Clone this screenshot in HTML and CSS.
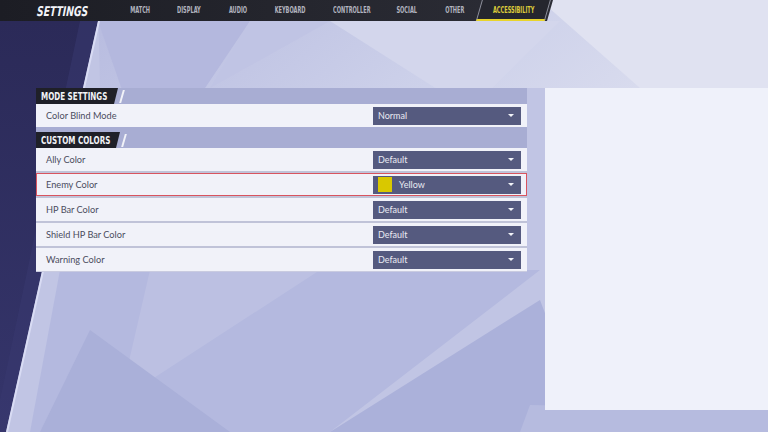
FILE: index.html
```html
<!DOCTYPE html>
<html lang="en">
<head>
<meta charset="utf-8">
<title>Settings - Accessibility</title>
<link rel="stylesheet" href="styles.css">
</head>
<body>
<div class="screen">
  <svg class="backdrop" viewBox="0 0 768 432" preserveAspectRatio="none" aria-hidden="true">
    <defs>
      <linearGradient id="band" x1="0" y1="0" x2="0" y2="1">
        <stop offset="0" stop-color="#2b2a58"/>
        <stop offset="1" stop-color="#35356b"/>
      </linearGradient>
      <linearGradient id="sky" x1="0" y1="0" x2="1" y2="0.4">
        <stop offset="0" stop-color="#b7bbdf"/>
        <stop offset="0.55" stop-color="#cdd1ea"/>
        <stop offset="1" stop-color="#dfe1f0"/>
      </linearGradient>
    </defs>
    <rect x="0" y="0" width="768" height="432" fill="#c1c5e4"/>
    <polygon points="98,0 768,0 768,230 545,88 100,88" fill="url(#sky)"/>
    <polygon points="330,21 560,21 470,110" fill="#d3d6ec"/>
    <polygon points="540,0 768,0 768,88 640,88" fill="#e0e2f1"/>
    <polygon points="98,21 250,21 150,170" fill="#b4b8de"/>
    <polygon points="250,21 330,21 210,88" fill="#c0c4e4"/>
    <polygon points="60,270 540,270 330,432 30,432" fill="#b4b9df"/>
    <polygon points="330,432 540,300 590,432" fill="#abb1da"/>
    <polygon points="150,270 320,270 120,400" fill="#bcc0e2"/>
    <polygon points="90,330 230,432 40,432" fill="#aab0d9"/>
    <polygon points="530,405 768,410 768,432 520,432" fill="#b6bbdf"/>
    <polygon points="0,21 98,21 6,432 0,432" fill="url(#band)"/>
    <polygon points="80,21 98,21 6,432 0,432 0,400" fill="#393970" opacity="0.55"/>
    <line x1="99" y1="21" x2="7" y2="432" stroke="#d9dcf4" stroke-width="2"/>
  </svg>

  <header class="topbar">
    <div class="title"><span>SETTINGS</span></div>
    <nav class="tabs">
      <span class="tab"><span>MATCH</span></span>
      <span class="tab"><span>DISPLAY</span></span>
      <span class="tab"><span>AUDIO</span></span>
      <span class="tab"><span>KEYBOARD</span></span>
      <span class="tab"><span>CONTROLLER</span></span>
      <span class="tab"><span>SOCIAL</span></span>
      <span class="tab"><span>OTHER</span></span>
      <span class="tab active"><span>ACCESSIBILITY</span></span>
    </nav>
  </header>

  <main class="content">
    <section class="settings">
      <div class="group-head first">
        <span class="group-label mode"><span>MODE SETTINGS</span></span><span class="slash"></span>
      </div>
      <div class="row">
        <span class="label">Color Blind Mode</span>
        <div class="select"><span class="value">Normal</span><span class="caret"></span></div>
      </div>

      <div class="group-head">
        <span class="group-label custom"><span>CUSTOM COLORS</span></span><span class="slash"></span>
      </div>
      <div class="row">
        <span class="label">Ally Color</span>
        <div class="select"><span class="value">Default</span><span class="caret"></span></div>
      </div>
      <div class="row sep selected">
        <span class="label">Enemy Color</span>
        <div class="select"><span class="swatch"></span><span class="value">Yellow</span><span class="caret"></span></div>
      </div>
      <div class="row sep">
        <span class="label">HP Bar Color</span>
        <div class="select"><span class="value">Default</span><span class="caret"></span></div>
      </div>
      <div class="row sep">
        <span class="label">Shield HP Bar Color</span>
        <div class="select"><span class="value">Default</span><span class="caret"></span></div>
      </div>
      <div class="row sep last">
        <span class="label">Warning Color</span>
        <div class="select"><span class="value">Default</span><span class="caret"></span></div>
      </div>
    </section>

    <aside class="preview"></aside>
  </main>
</div>
</body>
</html>
```

FILE: styles.css
```css
* { box-sizing: border-box; }

html, body {
  margin: 0;
  padding: 0;
  width: 768px;
  height: 432px;
  overflow: hidden;
  background: #c1c5e4;
}

.screen {
  position: relative;
  width: 768px;
  height: 432px;
  font-family: Lato, "Noto Sans", sans-serif;
}

.backdrop {
  position: absolute;
  left: 0;
  top: 0;
  width: 768px;
  height: 432px;
  z-index: 0;
}

/* ---------- top bar ---------- */
.topbar {
  position: relative;
  z-index: 1;
  width: 553px;
  height: 21px;
  background: linear-gradient(90deg, #1c1d24 0%, #25262e 55%, #2c2d36 100%);
  display: flex;
  align-items: stretch;
  padding-left: 37px;
  clip-path: polygon(0 0, 100% 0, calc(100% - 6px) 100%, 0 100%);
}

.title {
  width: 80px;
  display: flex;
  align-items: center;
  font-family: "DejaVu Sans Condensed", "DejaVu Sans", sans-serif;
  font-weight: 700;
  font-style: italic;
  font-size: 13.5px;
  color: #f2f3f8;
}

.title span {
  display: inline-block;
  transform: scaleX(0.76) skewX(-4deg);
  transform-origin: left center;
}

.tabs {
  display: grid;
  grid-template-columns: 46px 52px 46px 59px 63px 48px 47px 72px;
  height: 21px;
}

.tab {
  position: relative;
  display: flex;
  align-items: center;
  justify-content: center;
  font-family: "DejaVu Sans Condensed", "DejaVu Sans", sans-serif;
  font-size: 8px;
  font-weight: 700;
  color: #b1b3bf;
  white-space: nowrap;
}

.tab span {
  display: inline-block;
  transform: scaleX(0.7);
}

.tab.active {
  color: #dccb3a;
}

.tab.active::before {
  content: "";
  position: absolute;
  left: 1px;
  right: 2px;
  top: -1px;
  bottom: 0;
  background: #25262e;
  border-left: 1px solid #8f919d;
  border-right: 1px solid #8f919d;
  border-bottom: 2px solid #e8d42b;
  transform: skewX(-16deg);
  z-index: -1;
}

.tab.active span {
  position: relative;
  z-index: 1;
}

/* ---------- content ---------- */
.content {
  position: relative;
  z-index: 1;
  display: flex;
  align-items: flex-start;
  gap: 18px;
  padding: 67px 0 0 36px;
}

.settings {
  width: 491px;
  display: flex;
  flex-direction: column;
}

.group-head {
  display: flex;
  align-items: stretch;
  height: 21px;
  padding-top: 5px;
  background: #a8add3;
}

.group-head.first {
  height: 16px;
  padding-top: 0;
}

.group-label {
  display: flex;
  align-items: center;
  padding-left: 5px;
  overflow: hidden;
  background: #1f2028;
  color: #f1f2f6;
  font-family: "DejaVu Sans Condensed", "DejaVu Sans", sans-serif;
  font-weight: 700;
  font-size: 10.5px;
  white-space: nowrap;
  clip-path: polygon(0 0, 100% 0, calc(100% - 4px) 100%, 0 100%);
}

.group-label.mode { width: 82px; }
.group-label.custom { width: 84px; }

.group-label span {
  display: inline-block;
  transform: scaleX(0.76);
  transform-origin: left center;
}

.slash {
  width: 2px;
  margin-left: 3px;
  margin-top: 2px;
  margin-bottom: 1px;
  background: #f1f2f8;
  transform: skewX(-16deg);
}

.row {
  display: flex;
  align-items: center;
  justify-content: space-between;
  height: 23px;
  padding: 0 6px 0 10px;
  background: #f1f2f9;
}

.row.sep {
  height: 25px;
  border-top: 2px solid #c0c3d8;
}

.row.last {
  box-shadow: 0 1px 0 #c9cbe0;
}

.row.selected {
  box-shadow: inset 0 0 0 1px #d9545f;
}

.label {
  font-size: 9.2px;
  color: #4b4d5e;
}

.select {
  display: flex;
  align-items: center;
  width: 148px;
  height: 18px;
  padding: 0 7px 0 5px;
  background: #555a7f;
  color: #e9eaf3;
  font-size: 9px;
}

.select .value {
  flex: 1;
}

.swatch {
  width: 14px;
  height: 15px;
  margin-right: 7px;
  background: #d9c800;
}

.caret {
  width: 0;
  height: 0;
  border-left: 3px solid transparent;
  border-right: 3px solid transparent;
  border-top: 3.5px solid #f2f3f8;
}

.preview {
  width: 223px;
  height: 322px;
  background: #eff1fa;
}
```
